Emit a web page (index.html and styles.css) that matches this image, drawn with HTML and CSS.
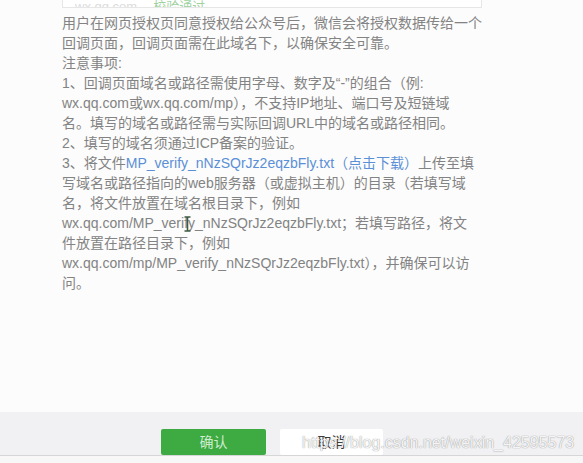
FILE: index.html
```html
<!DOCTYPE html>
<html lang="zh-CN">
<head>
<meta charset="utf-8">
<title>网页授权域名</title>
<link rel="stylesheet" href="styles.css">
</head>
<body>
<div class="page">
  <main class="content">
    <div class="field"><span class="field-text">wx.qq.com</span><span class="field-ok">校验通过</span></div>
    <div class="desc">
      <p>用户在网页授权页同意授权给公众号后，微信会将授权数据传给一个<br>回调页面，回调页面需在此域名下，以确保安全可靠。</p>
      <p>注意事项:</p>
      <p>1、回调页面域名或路径需使用字母、数字及“-”的组合（例:<br>wx.qq.com或wx.qq.com/mp），不支持IP地址、端口号及短链域<br>名。填写的域名或路径需与实际回调URL中的域名或路径相同。</p>
      <p>2、填写的域名须通过ICP备案的验证。</p>
      <p>3、将文件<a class="link" href="#">MP_verify_nNzSQrJz2eqzbFly.txt（点击下载）</a>上传至填<br>写域名或路径指向的web服务器（或虚拟主机）的目录（若填写域<br>名，将文件放置在域名根目录下，例如<br>wx.qq.com/MP_veri<span class="caret-host">f<svg class="ibeam" width="7" height="16" viewBox="0 0 7 16"><path d="M0.5 1 H6.5 M3.5 1 V15 M0.5 15 H6.5" stroke="#3f5a45" stroke-width="1.6" fill="none"/></svg></span>y_nNzSQrJz2eqzbFly.txt；若填写路径，将文<br>件放置在路径目录下，例如<br>wx.qq.com/mp/MP_verify_nNzSQrJz2eqzbFly.txt），并确保可以访<br>问。</p>
    </div>
  </main>
  <footer class="footer">
    <div class="actions">
      <button class="btn btn-primary">确认</button>
      <button class="btn btn-default">取消</button>
    </div>
    <span class="watermark">https://blog.csdn.net/weixin_42595573</span>
  </footer>
  <div class="bottom-strip"></div>
</div>
</body>
</html>
```

FILE: styles.css
```css
html, body {
  margin: 0;
  padding: 0;
}
body {
  background: #fcfcfc;
  font-family: "Liberation Sans", "Noto Sans CJK SC", sans-serif;
  font-size: 14px;
  color: #838383;
  width: 583px;
  height: 463px;
  overflow: hidden;
}
.page {
  display: flex;
  flex-direction: column;
  height: 463px;
}
.content {
  flex: 1;
  padding-left: 62px;
}
.field {
  width: 418px;
  height: 7px;
  border: 1px solid #e6e6e6;
  border-top: none;
  background: #ffffff;
  overflow: hidden;
  font-size: 13px;
  line-height: 13px;
}
.field-text {
  display: inline-block;
  margin-top: -11px;
  margin-left: 12px;
  color: #dcdcdc;
}
.field-ok {
  display: inline-block;
  margin-top: -11px;
  margin-left: 16px;
  color: #9fd29f;
}
.desc {
  margin-top: 5px;
  line-height: 20px;
  white-space: nowrap;
}
.desc p {
  margin: 0;
}
.link {
  color: #5b8fd6;
  text-decoration: none;
}
.caret-host {
  position: relative;
}
.ibeam {
  position: absolute;
  left: 0px;
  top: 1px;
}
.footer {
  position: relative;
  height: 44px;
  background: #f1f1f4;
  border-bottom: 1px solid #d6d6d6;
  box-sizing: border-box;
}
.actions {
  width: 420px;
  margin-left: 62px;
  padding-top: 17px;
  display: flex;
  justify-content: center;
  gap: 14px;
}
.btn {
  height: 26px;
  border: none;
  border-radius: 2px;
  font-family: "Liberation Sans", "Noto Sans CJK SC", sans-serif;
  font-size: 14px;
  padding: 0;
  line-height: 26px;
}
.btn-primary {
  width: 105px;
  background: #3dab42;
  color: rgba(235, 250, 235, 0.85);
}
.btn-default {
  width: 103px;
  background: #ffffff;
  color: #3c3c3c;
}
.watermark {
  position: absolute;
  left: 302px;
  top: 21px;
  font-family: "Liberation Sans", sans-serif;
  font-size: 16px;
  line-height: 20px;
  color: rgba(255, 255, 255, 0.92);
  text-shadow: 0 0 1px rgba(90, 90, 90, 0.55), 0 0 1px rgba(90, 90, 90, 0.35);
  white-space: nowrap;
}
.bottom-strip {
  height: 7px;
  background: #f7f7f7;
}
```
